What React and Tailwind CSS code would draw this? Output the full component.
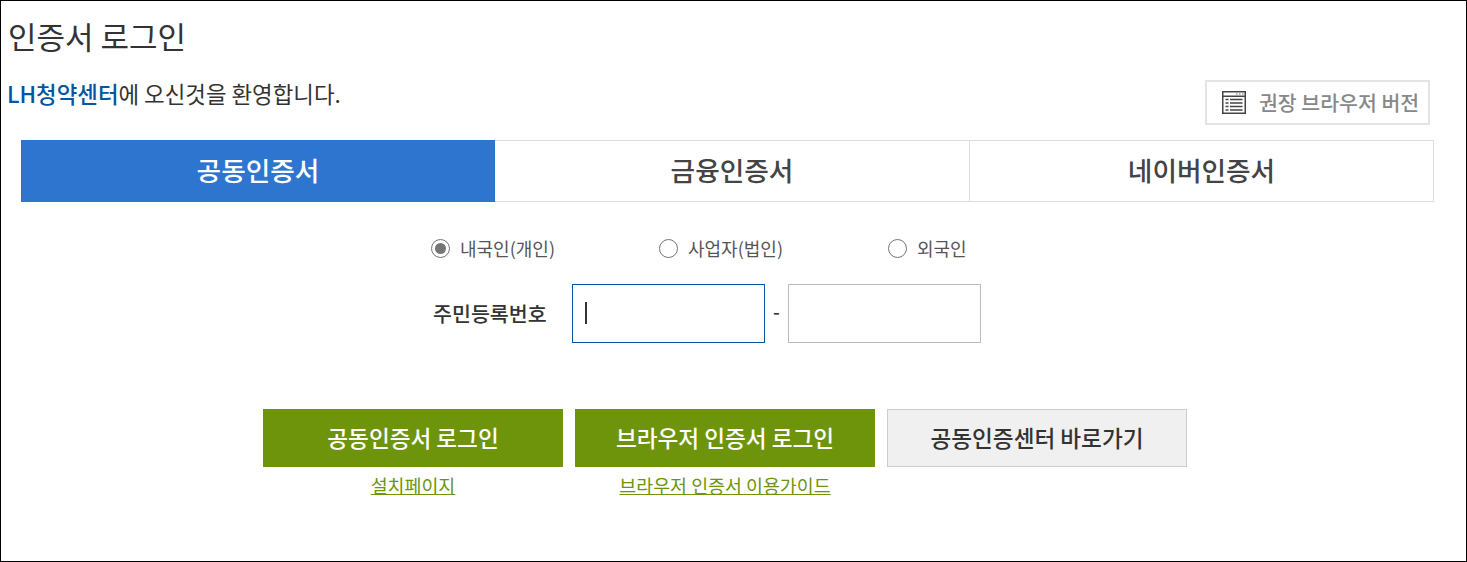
const font = { fontFamily: '"Noto Sans CJK KR", "Liberation Sans", sans-serif' };

function BrowserIcon() {
  return (
    <svg width="24" height="23" viewBox="0 0 24 23" fill="none" className="shrink-0">
      <rect x="0.75" y="0.75" width="22.5" height="21.5" fill="#fff" stroke="#444" strokeWidth="1.5" />
      <path d="M1 5.25h22" stroke="#444" strokeWidth="1.5" />
      <path d="M14 3h1.5M17 3h1.5M20 3h1.5" stroke="#666" strokeWidth="1.2" />
      <path d="M3.5 8.5h3M8 8.5h12.5M3.5 12h3M8 12h12.5M3.5 15.5h3M8 15.5h12.5M3.5 19h3M8 19h12.5" stroke="#444" strokeWidth="1.5" />
    </svg>
  );
}

function Radio({ label, checked, className }) {
  return (
    <label className={`flex items-center gap-[10px] ${className}`}>
      <span className="w-[19px] h-[19px] rounded-full border border-[#767676] bg-white flex items-center justify-center">
        {checked && <span className="w-[11px] h-[11px] rounded-full bg-[#767676]" />}
      </span>
      <span className="text-[18px] leading-[20px] text-[#555]">{label}</span>
    </label>
  );
}

export default function App() {
  return (
    <div style={font} className="w-[1467px] h-[562px] border border-black bg-white text-[#333] overflow-hidden">
      <div className="pl-[7px] pr-[36px] pt-[14px]">
        <h1 className="text-[31px] leading-[42px] font-normal">인증서 로그인</h1>
        <div className="flex justify-between items-start mt-[20px]">
          <p className="text-[22.4px] leading-[32px] -ml-px">
            <span className="text-[#00569f] font-medium">LH청약센터</span>에 오신것을 환영합니다.
          </p>
          <a className="mt-[3px] w-[225px] h-[45px] border-2 border-[#e4e4e4] flex items-center pl-[15px] gap-[13px] text-[#888] text-[20.5px] font-medium">
            <BrowserIcon />
            <span>권장 브라우저 버전</span>
          </a>
        </div>
      </div>

      <div className="ml-[20px] mt-[15px] w-[1413px] h-[62px] grid grid-cols-[474px_475px_464px] text-[26.7px] font-medium text-[#444]">
        <div className="bg-[#2e75cf] text-white flex items-center justify-center pb-[1px]">공동인증서</div>
        <div className="border border-l-0 border-[#ddd] flex items-center justify-center pb-[1px]">금융인증서</div>
        <div className="border border-l-0 border-[#ddd] flex items-center justify-center pb-[1px]">네이버인증서</div>
      </div>

      <div className="flex mt-[36px] pl-[430px]">
        <Radio label="내국인(개인)" checked className="w-[228px]" />
        <Radio label="사업자(법인)" className="w-[229px]" />
        <Radio label="외국인" />
      </div>

      <div className="flex items-center mt-[26px] pl-[432px]">
        <span className="w-[139px] text-[20.6px] font-medium">주민등록번호</span>
        <div className="w-[193px] h-[59px] border border-[#00569f] flex items-center pl-[12px] pb-[2px]">
          <span className="w-[1.5px] h-[22px] bg-[#333]" />
        </div>
        <span className="w-[23px] text-center text-[19px] font-medium pb-[4px]">-</span>
        <div className="w-[193px] h-[59px] border border-[#bbb]" />
      </div>

      <div className="flex gap-[12px] mt-[66px] pl-[262px]">
        <div className="w-[300px]">
          <button className="w-full h-[58px] bg-[#6e940c] text-white text-[22.6px] font-medium">공동인증서 로그인</button>
          <a className="block mt-[6px] text-center text-[18.4px] leading-[24px] text-[#6e940c] underline">설치페이지</a>
        </div>
        <div className="w-[300px]">
          <button className="w-full h-[58px] bg-[#6e940c] text-white text-[22.6px] font-medium">브라우저 인증서 로그인</button>
          <a className="block mt-[6px] text-center text-[18.4px] leading-[24px] text-[#6e940c] underline">브라우저 인증서 이용가이드</a>
        </div>
        <button className="w-[300px] h-[58px] bg-[#f0f0f0] border border-[#ccc] text-[22.6px] font-medium text-[#333]">공동인증센터 바로가기</button>
      </div>
    </div>
  );
}
